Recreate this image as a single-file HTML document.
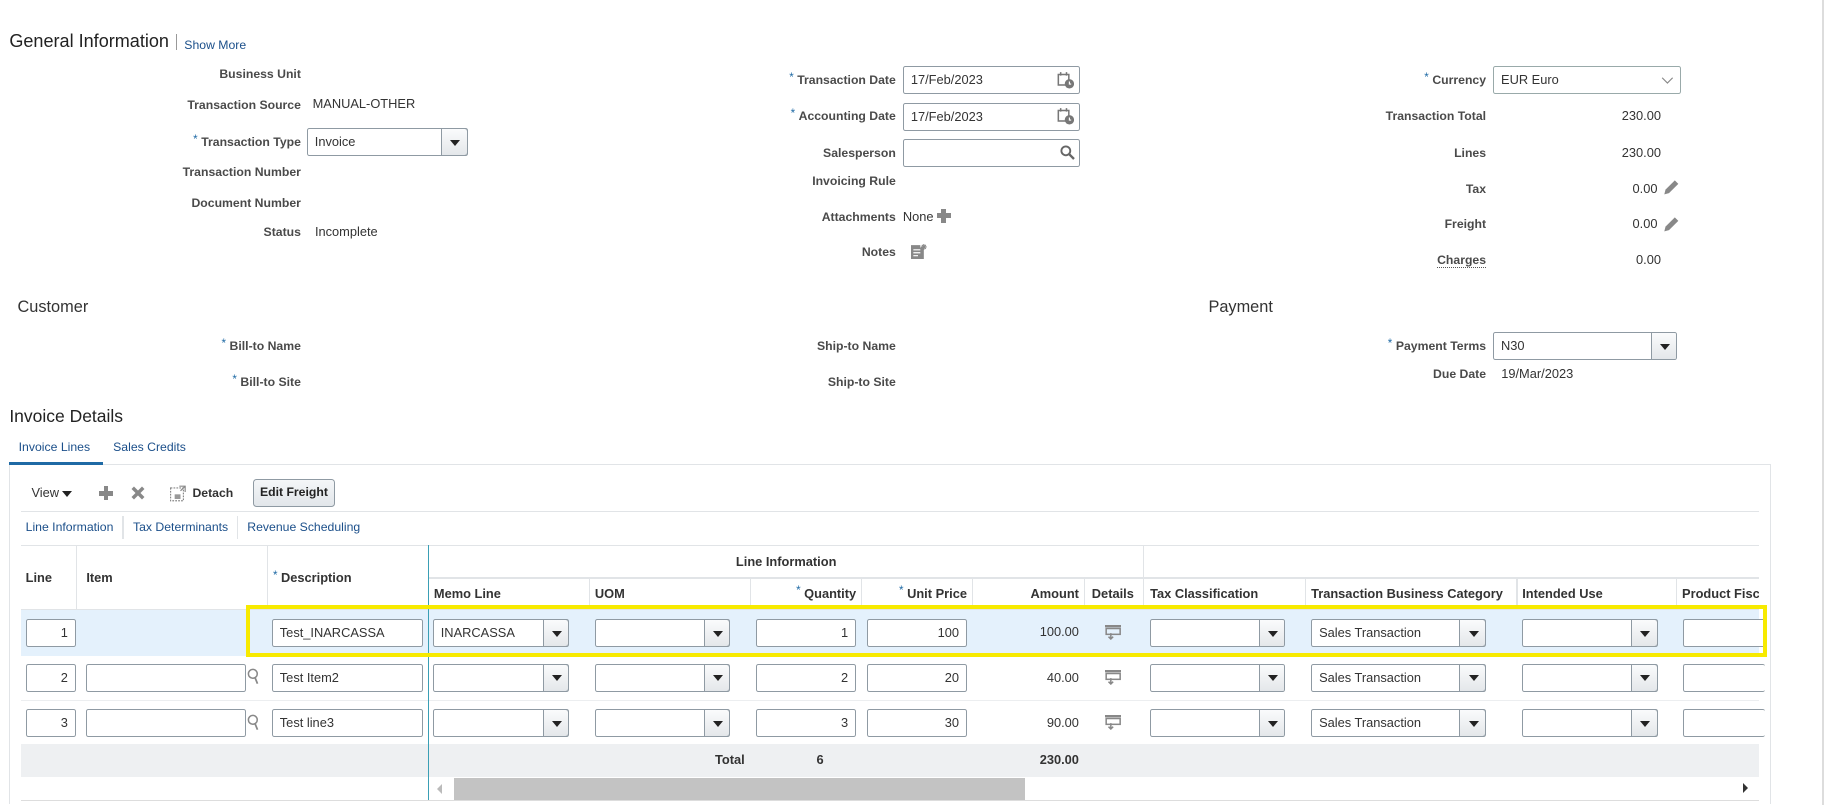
<!DOCTYPE html>
<html><head><meta charset="utf-8"><style>
html,body{margin:0;padding:0;background:#fff;overflow:hidden}
body{width:1829px;height:804px}
#w{position:absolute;left:0;top:0;width:1568px;height:690px;zoom:1.16645;font-family:"Liberation Sans",Arial,sans-serif;color:#333;font-size:11px}
.a{position:absolute;white-space:nowrap;line-height:14px}
.l{position:absolute;width:220px;text-align:right;font-weight:bold;color:#4a4a4a;line-height:14px;white-space:nowrap;font-size:10.5px}
.s{color:#1f6aa5;font-weight:normal;font-size:10px;position:relative;top:-3px;margin-right:3px;line-height:0}
.v{position:absolute;line-height:14px;white-space:nowrap;color:#333}
.in{position:absolute;box-sizing:border-box;border:1px solid #8f9aa3;border-radius:2px;background:#fff;height:24px;line-height:22px;padding:0 6px;font-size:11px;color:#333;white-space:nowrap;overflow:hidden}
.dd{position:absolute;top:-1px;right:-1px;width:23px;height:24px;box-sizing:border-box;border:1px solid #8f9aa3;border-radius:0 3px 3px 0;background:linear-gradient(#fafbfc,#e4e7ea)}
.dd:after{content:"";position:absolute;left:7px;top:9px;border-left:4.5px solid transparent;border-right:4.5px solid transparent;border-top:6px solid #222}
.h{position:absolute;font-size:16px;color:#222;line-height:20px;white-space:nowrap}
.hl{position:absolute;background:#e1e4e7;height:1px}
.th{position:absolute;font-weight:bold;color:#333;line-height:14px;white-space:nowrap}
.vl{position:absolute;width:1px;background:#e1e4e7}
</style></head><body><div id="w">

<div class="h" style="left:8px;top:26px;font-size:15.5px">General Information</div>
<div style="position:absolute;left:151px;top:29px;width:1px;height:14px;background:#999"></div>
<div class="a" style="left:158px;top:32px;color:#1b4f8a;font-size:10.5px">Show More</div>

<div class="l" style="left:38px;top:57px">Business Unit</div>
<div class="l" style="left:38px;top:83px">Transaction Source</div><div class="v" style="left:268px;top:82px">MANUAL-OTHER</div>
<div class="l" style="left:38px;top:115px"><span class="s">*</span>Transaction Type</div>
<div class="in" style="left:263px;top:110px;width:138px">Invoice<div class="dd"></div></div>
<div class="l" style="left:38px;top:141px">Transaction Number</div>
<div class="l" style="left:38px;top:167px">Document Number</div>
<div class="l" style="left:38px;top:192px">Status</div><div class="v" style="left:270px;top:192px">Incomplete</div>

<div class="l" style="left:548px;top:62px"><span class="s">*</span>Transaction Date</div>
<div class="in" style="left:774px;top:57px;width:152px">17/Feb/2023</div>
<div class="l" style="left:548px;top:93px"><span class="s">*</span>Accounting Date</div>
<div class="in" style="left:774px;top:88px;width:152px">17/Feb/2023</div>
<svg class="a" style="left:905px;top:61px" width="16" height="16" viewBox="0 0 16 16"><rect x="2" y="3" width="9" height="9" fill="none" stroke="#777" stroke-width="1.3"/><path d="M4 1v3M9 1v3" stroke="#777" stroke-width="1.3"/><circle cx="11.5" cy="11" r="4" fill="#777"/><path d="M11.5 9v2.2h1.5" stroke="#fff" fill="none"/></svg>
<svg class="a" style="left:905px;top:92px" width="16" height="16" viewBox="0 0 16 16"><rect x="2" y="3" width="9" height="9" fill="none" stroke="#777" stroke-width="1.3"/><path d="M4 1v3M9 1v3" stroke="#777" stroke-width="1.3"/><circle cx="11.5" cy="11" r="4" fill="#777"/><path d="M11.5 9v2.2h1.5" stroke="#fff" fill="none"/></svg>
<div class="l" style="left:548px;top:124px">Salesperson</div>
<div class="in" style="left:774px;top:119px;width:152px"></div>
<svg class="a" style="left:909px;top:124px" width="13" height="13" viewBox="0 0 13 13"><circle cx="5" cy="5" r="3.8" fill="none" stroke="#666" stroke-width="1.6"/><path d="M8 8l4 4" stroke="#666" stroke-width="2"/></svg>
<div class="l" style="left:548px;top:148px">Invoicing Rule</div>
<div class="l" style="left:548px;top:179px">Attachments</div><div class="v" style="left:774px;top:179px">None</div>
<div class="a" style="left:803px;top:179px;width:12px;height:12px"><div style="position:absolute;left:4px;top:0;width:4px;height:12px;background:#888"></div><div style="position:absolute;left:0;top:4px;width:12px;height:4px;background:#888"></div></div>
<div class="l" style="left:548px;top:209px">Notes</div>
<svg class="a" style="left:781px;top:209px" width="14" height="13" viewBox="0 0 14 13"><path d="M0 1h8v2h3v10H0z" fill="#888"/><path d="M2 5h6M2 7.5h6M2 10h4" stroke="#fff"/><path d="M11 0v5M8.5 2.5h5M9.3 0.8l3.4 3.4M12.7 0.8l-3.4 3.4" stroke="#888"/></svg>

<div class="l" style="left:1054px;top:62px"><span class="s">*</span>Currency</div>
<div class="in" style="left:1280px;top:57px;width:161px;border-color:#9aa">EUR Euro</div>
<svg class="a" style="left:1424px;top:65px" width="11" height="8" viewBox="0 0 11 8"><path d="M1 1.5l4.5 4.5 4.5-4.5" stroke="#888" fill="none"/></svg>
<div class="l" style="left:1054px;top:93px">Transaction Total</div><div class="v" style="left:1364px;top:93px;width:60px;text-align:right">230.00</div>
<div class="l" style="left:1054px;top:124px">Lines</div><div class="v" style="left:1364px;top:124px;width:60px;text-align:right">230.00</div>
<div class="l" style="left:1054px;top:155px">Tax</div><div class="v" style="left:1361px;top:155px;width:60px;text-align:right">0.00</div>
<div class="l" style="left:1054px;top:185px">Freight</div><div class="v" style="left:1361px;top:185px;width:60px;text-align:right">0.00</div>
<svg class="a" style="left:1425px;top:153px" width="15" height="16" viewBox="0 0 15 16"><path d="M2 14l1-4 8-8 3 3-8 8z" fill="#888"/></svg>
<svg class="a" style="left:1425px;top:184px" width="15" height="16" viewBox="0 0 15 16"><path d="M2 14l1-4 8-8 3 3-8 8z" fill="#888"/></svg>
<div class="l" style="left:1054px;top:216px"><span style="border-bottom:1px dotted #555">Charges</span></div><div class="v" style="left:1364px;top:216px;width:60px;text-align:right">0.00</div>

<div class="h" style="left:15px;top:254px;font-size:14px;color:#333">Customer</div>
<div class="h" style="left:1036px;top:254px;font-size:14px;color:#333">Payment</div>
<div class="l" style="left:38px;top:290px"><span class="s">*</span>Bill-to Name</div>
<div class="l" style="left:38px;top:321px"><span class="s">*</span>Bill-to Site</div>
<div class="l" style="left:548px;top:290px">Ship-to Name</div>
<div class="l" style="left:548px;top:321px">Ship-to Site</div>
<div class="l" style="left:1054px;top:290px"><span class="s">*</span>Payment Terms</div>
<div class="in" style="left:1280px;top:285px;width:158px">N30<div class="dd"></div></div>
<div class="l" style="left:1054px;top:314px">Due Date</div><div class="v" style="left:1287px;top:314px">19/Mar/2023</div>

<div class="h" style="left:8px;top:347px;font-size:15px;color:#222">Invoice Details</div>
<div class="a" style="left:16px;top:376px;color:#1b4f8a;font-size:10.5px">Invoice Lines</div>
<div class="a" style="left:97px;top:376px;color:#1b4f8a;font-size:10.5px">Sales Credits</div>
<div class="hl" style="left:8px;top:398px;width:1510px"></div>
<div style="position:absolute;left:8px;top:396px;width:80px;height:3px;background:#1f6aa5"></div>
<div class="vl" style="left:8px;top:399px;height:290px"></div>
<div class="vl" style="left:1517px;top:399px;height:290px"></div>
<div style="position:absolute;left:1562px;top:0;width:2px;height:690px;background:#ddd"></div>

<div class="a" style="left:27px;top:416px;color:#333">View</div>
<div class="a" style="left:53px;top:421px;border-left:4.5px solid transparent;border-right:4.5px solid transparent;border-top:6px solid #222;width:0"></div>
<div class="a" style="left:85px;top:417px;width:12px;height:12px"><div style="position:absolute;left:4px;top:0;width:4px;height:12px;background:#888"></div><div style="position:absolute;left:0;top:4px;width:12px;height:4px;background:#888"></div></div>
<svg class="a" style="left:112px;top:417px" width="12" height="12" viewBox="0 0 12 12"><path d="M1.5 1.5l9 9M10.5 1.5l-9 9" stroke="#888" stroke-width="3"/></svg>
<svg class="a" style="left:146px;top:416px" width="14" height="14" viewBox="0 0 14 14"><rect x="0.5" y="2.5" width="11" height="11" fill="none" stroke="#888" stroke-dasharray="1.5 1"/><rect x="4" y="8" width="5" height="4" fill="#999"/><path d="M8 1h5v5M13 1l-4 4" stroke="#888" fill="none"/></svg>
<div class="a" style="left:165px;top:416px;font-weight:bold;color:#333;font-size:10.5px">Detach</div>
<div class="a" style="left:217px;top:411px;width:70px;height:24px;box-sizing:border-box;border:1px solid #8f9aa3;border-radius:3px;background:linear-gradient(#f4f6f8,#e2e6ea);text-align:center;line-height:22px;font-weight:bold;color:#222;font-size:10.5px">Edit Freight</div>
<div class="hl" style="left:18px;top:438px;width:1490px"></div>
<div class="a" style="left:22px;top:445px;color:#1b4f8a;font-size:10.5px">Line Information</div>
<div class="vl" style="left:105px;top:442px;height:20px"></div>
<div class="a" style="left:114px;top:445px;color:#1b4f8a;font-size:10.5px">Tax Determinants</div>
<div class="vl" style="left:203px;top:442px;height:20px"></div>
<div class="a" style="left:212px;top:445px;color:#1b4f8a;font-size:10.5px">Revenue Scheduling</div>
<div class="hl" style="left:18px;top:467px;width:1490px"></div>

<!-- header -->
<div class="hl" style="left:367px;top:495px;width:1141px"></div>
<div class="hl" style="left:18px;top:522px;width:1490px"></div>
<div class="vl" style="left:65px;top:467px;height:55px"></div>
<div class="vl" style="left:229px;top:467px;height:55px"></div>
<div class="vl" style="left:980px;top:467px;height:55px"></div>
<div class="vl" style="left:505px;top:495px;height:27px"></div>
<div class="vl" style="left:643px;top:495px;height:27px"></div>
<div class="vl" style="left:738px;top:495px;height:27px"></div>
<div class="vl" style="left:833px;top:495px;height:27px"></div>
<div class="vl" style="left:929px;top:495px;height:27px"></div>
<div class="vl" style="left:1119px;top:495px;height:27px"></div>
<div class="vl" style="left:1300px;top:495px;height:27px"></div>
<div class="vl" style="left:1437px;top:495px;height:27px"></div>
<div class="th" style="left:580px;top:475px;width:188px;text-align:center">Line Information</div>
<div class="th" style="left:22px;top:489px">Line</div>
<div class="th" style="left:74px;top:489px">Item</div>
<div class="th" style="left:234px;top:489px"><span class="s">*</span>Description</div>
<div class="th" style="left:372px;top:502px">Memo Line</div>
<div class="th" style="left:510px;top:502px">UOM</div>
<div class="th" style="left:600px;top:502px;width:134px;text-align:right"><span class="s">*</span>Quantity</div>
<div class="th" style="left:700px;top:502px;width:129px;text-align:right"><span class="s">*</span>Unit Price</div>
<div class="th" style="left:825px;top:502px;width:100px;text-align:right">Amount</div>
<div class="th" style="left:936px;top:502px">Details</div>
<div class="th" style="left:986px;top:502px">Tax Classification</div>
<div class="th" style="left:1124px;top:502px">Transaction Business Category</div>
<div class="th" style="left:1305px;top:502px">Intended Use</div>
<div class="th" style="left:1442px;top:502px;width:66px;overflow:hidden">Product Fiscal</div>

<!-- rows -->
<div style="position:absolute;left:18px;top:523px;width:1490px;height:39px;background:#e4f1fc"></div>
<div class="hl" style="left:18px;top:600px;width:1490px;background:#eceef0"></div>
<div style="position:absolute;left:18px;top:638px;width:1490px;height:28px;background:#eef0f2"></div>
<div class="vl" style="left:367px;top:467px;height:220px;background:#3a9fb5"></div>
<div class="vl" style="left:18px;top:686px;width:1490px;height:1px;background:#ddd"></div>

<div class="in" style="left:22px;top:531px;width:43px;text-align:right">1</div>
<div class="in" style="left:233px;top:531px;width:130px">Test_INARCASSA</div>
<div class="in" style="left:371px;top:531px;width:117px">INARCASSA<div class="dd"></div></div>
<div class="in" style="left:510px;top:531px;width:116px"><div class="dd"></div></div>
<div class="in" style="left:648px;top:531px;width:86px;text-align:right">1</div>
<div class="in" style="left:743px;top:531px;width:86px;text-align:right">100</div>
<div class="v" style="left:855px;top:535px;width:70px;text-align:right">100.00</div>
<div class="in" style="left:986px;top:531px;width:116px"><div class="dd"></div></div>
<div class="in" style="left:1124px;top:531px;width:150px">Sales Transaction<div class="dd"></div></div>
<div class="in" style="left:1305px;top:531px;width:116px"><div class="dd"></div></div>
<div class="in" style="left:1443px;top:531px;width:70px;border-right:none"></div>

<div class="in" style="left:22px;top:569px;width:43px;text-align:right">2</div>
<div class="in" style="left:74px;top:569px;width:137px"></div>
<div class="in" style="left:233px;top:569px;width:130px">Test Item2</div>
<div class="in" style="left:371px;top:569px;width:117px"><div class="dd"></div></div>
<div class="in" style="left:510px;top:569px;width:116px"><div class="dd"></div></div>
<div class="in" style="left:648px;top:569px;width:86px;text-align:right">2</div>
<div class="in" style="left:743px;top:569px;width:86px;text-align:right">20</div>
<div class="v" style="left:855px;top:574px;width:70px;text-align:right">40.00</div>
<div class="in" style="left:986px;top:569px;width:116px"><div class="dd"></div></div>
<div class="in" style="left:1124px;top:569px;width:150px">Sales Transaction<div class="dd"></div></div>
<div class="in" style="left:1305px;top:569px;width:116px"><div class="dd"></div></div>
<div class="in" style="left:1443px;top:569px;width:70px;border-right:none"></div>

<div class="in" style="left:22px;top:608px;width:43px;text-align:right">3</div>
<div class="in" style="left:74px;top:608px;width:137px"></div>
<div class="in" style="left:233px;top:608px;width:130px">Test line3</div>
<div class="in" style="left:371px;top:608px;width:117px"><div class="dd"></div></div>
<div class="in" style="left:510px;top:608px;width:116px"><div class="dd"></div></div>
<div class="in" style="left:648px;top:608px;width:86px;text-align:right">3</div>
<div class="in" style="left:743px;top:608px;width:86px;text-align:right">30</div>
<div class="v" style="left:855px;top:613px;width:70px;text-align:right">90.00</div>
<div class="in" style="left:986px;top:608px;width:116px"><div class="dd"></div></div>
<div class="in" style="left:1124px;top:608px;width:150px">Sales Transaction<div class="dd"></div></div>
<div class="in" style="left:1305px;top:608px;width:116px"><div class="dd"></div></div>
<div class="in" style="left:1443px;top:608px;width:70px;border-right:none"></div>

<svg class="a" style="left:212px;top:573px" width="12" height="16" viewBox="0 0 12 16"><circle cx="5" cy="5" r="3.8" fill="none" stroke="#888" stroke-width="1.3"/><path d="M7 8.5l2 5" stroke="#888" stroke-width="1.5"/></svg>
<svg class="a" style="left:212px;top:612px" width="12" height="16" viewBox="0 0 12 16"><circle cx="5" cy="5" r="3.8" fill="none" stroke="#888" stroke-width="1.3"/><path d="M7 8.5l2 5" stroke="#888" stroke-width="1.5"/></svg>

<svg class="a" style="left:947px;top:536px" width="14" height="13" viewBox="0 0 14 13"><rect x="0" y="0" width="14" height="2" fill="#888"/><rect x="1" y="3" width="12" height="5" fill="none" stroke="#888" stroke-width="1.3"/><path d="M5 7v5M3 10l2 2 2-2" stroke="#888" fill="none" stroke-width="1.3"/></svg>
<svg class="a" style="left:947px;top:574px" width="14" height="13" viewBox="0 0 14 13"><rect x="0" y="0" width="14" height="2" fill="#888"/><rect x="1" y="3" width="12" height="5" fill="none" stroke="#888" stroke-width="1.3"/><path d="M5 7v5M3 10l2 2 2-2" stroke="#888" fill="none" stroke-width="1.3"/></svg>
<svg class="a" style="left:947px;top:613px" width="14" height="13" viewBox="0 0 14 13"><rect x="0" y="0" width="14" height="2" fill="#888"/><rect x="1" y="3" width="12" height="5" fill="none" stroke="#888" stroke-width="1.3"/><path d="M5 7v5M3 10l2 2 2-2" stroke="#888" fill="none" stroke-width="1.3"/></svg>

<div class="th" style="left:613px;top:645px">Total</div>
<div class="th" style="left:700px;top:645px">6</div>
<div class="th" style="left:855px;top:645px;width:70px;text-align:right">230.00</div>

<div style="position:absolute;left:389px;top:667px;width:490px;height:19px;background:#c3c3c3"></div>
<div class="a" style="left:375px;top:672px;border-top:5px solid transparent;border-bottom:5px solid transparent;border-right:5px solid #bbb;width:0"></div>
<div class="a" style="left:1494px;top:671px;border-top:5px solid transparent;border-bottom:5px solid transparent;border-left:5px solid #333;width:0"></div>

<div style="position:absolute;left:211px;top:519px;width:1304px;height:44px;box-sizing:border-box;border:3.5px solid #f7ea00"></div>

</div></body></html>
